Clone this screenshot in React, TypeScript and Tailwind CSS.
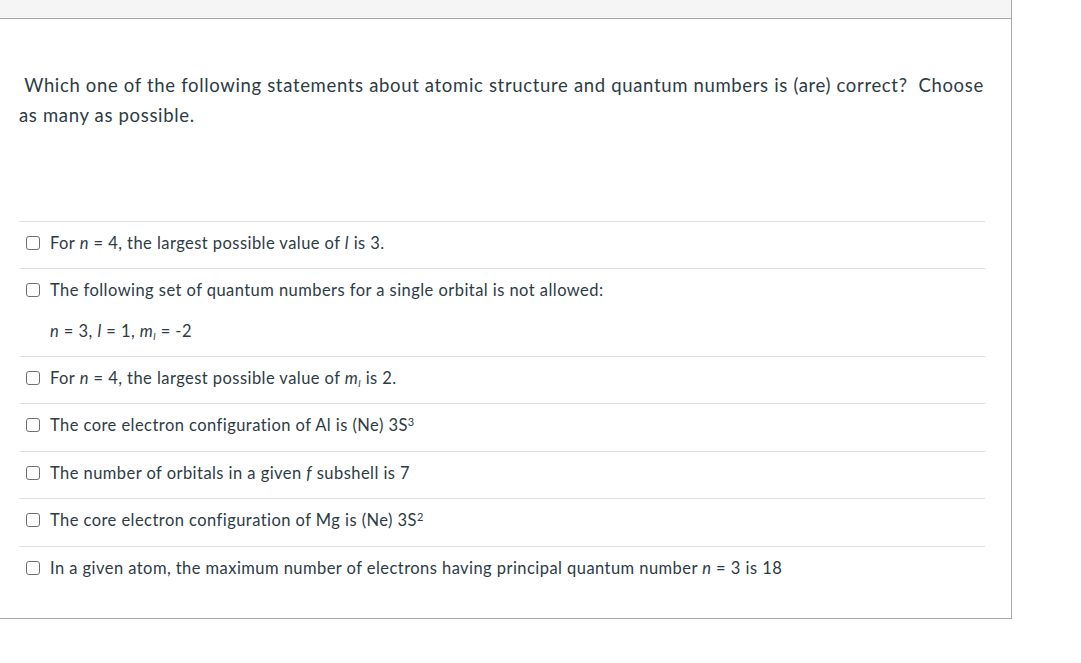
import React from 'react';

type Answer = { id: number; body: React.ReactNode; extra?: React.ReactNode; tall?: boolean };

const Ml = () => (
  <>
    <i>m</i>
    <sub className="text-[10px] italic">l</sub>
  </>
);

const answers: Answer[] = [
  { id: 1, body: <>For <i>n</i> = 4, the largest possible value of <i>l</i> is 3.</> },
  {
    id: 2,
    body: <>The following set of quantum numbers for a single orbital is not allowed:</>,
    extra: <><i>n</i> = 3, <i>l</i> = 1, <Ml /> = -2</>,
  },
  { id: 3, body: <>For <i>n</i> = 4, the largest possible value of <Ml /> is 2.</> },
  { id: 4, body: <>The core electron configuration of Al is (Ne) 3S<sup className="text-[11px]">3</sup></>, tall: true },
  { id: 5, body: <>The number of orbitals in a given <i>f</i> subshell is 7</> },
  { id: 6, body: <>The core electron configuration of Mg is (Ne) 3S<sup className="text-[11px]">2</sup></>, tall: true },
  {
    id: 7,
    body: <>In a given atom, the maximum number of electrons having principal quantum number <i>n</i> = 3 is 18</>,
  },
];

const Checkbox = () => (
  <span className="mt-[5px] h-[14px] w-[14px] shrink-0 rounded-[3px] border border-[#6f6f6f] bg-white" />
);

export default function App() {
  return (
    <div className="h-[663px] w-full bg-white text-[#2d3b45]" style={{ fontFamily: 'Lato, "Open Sans", sans-serif' }}>
      <div className="flex h-[619px] w-[1012px] flex-col border-r border-b border-[#a8a8a8]">
        <div className="h-[19px] shrink-0 border-b border-[#a8a8a8] bg-[#f5f5f5]" />
        <div className="pl-[19px] pr-[26px] pt-[51px]">
          <p className="-mr-[10px] text-[18.5px] leading-[30px] tracking-[0.036em]">
            &nbsp;Which one of the following statements about atomic structure and quantum numbers is (are) correct?&nbsp; Choose as many as possible.
          </p>
          <ul className="mt-[91px]">
            {answers.map((a) => (
              <li
                key={a.id}
                className={`border-t border-[#dedede] pt-[9px] pl-[7px] text-[16.5px] leading-[24px] tracking-[0.027em] ${a.tall ? 'pb-[14px]' : 'pb-[13px]'}`}
              >
                <div className="flex gap-[10px]">
                  <Checkbox />
                  <div>
                    <p>{a.body}</p>
                    {a.extra && <p className="mt-[17px]">{a.extra}</p>}
                  </div>
                </div>
              </li>
            ))}
          </ul>
        </div>
      </div>
    </div>
  );
}
